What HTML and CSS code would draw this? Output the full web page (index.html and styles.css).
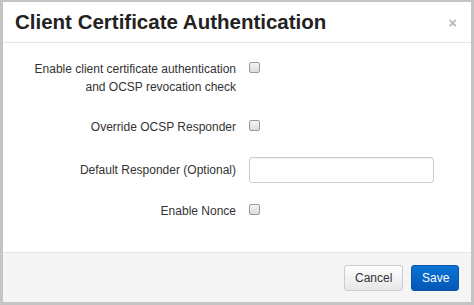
FILE: index.html
```html
<!DOCTYPE html>
<html lang="en">
<head>
  <meta charset="UTF-8">
  <title>Client Certificate Authentication</title>
  <link rel="stylesheet" href="styles.css">
</head>
<body>
  <div class="modal">
    <div class="modal-header">
      <h1>Client Certificate Authentication</h1>
      <span class="close">×</span>
    </div>

    <div class="modal-body">
      <div class="form-row first">
        <label class="field-label">Enable client certificate authentication<br>and OCSP revocation check</label>
        <span class="check"></span>
      </div>
      <div class="form-row">
        <label class="field-label">Override OCSP Responder</label>
        <span class="check"></span>
      </div>
      <div class="form-row input-row">
        <label class="field-label">Default Responder (Optional)</label>
        <input class="text-input" type="text">
      </div>
      <div class="form-row">
        <label class="field-label">Enable Nonce</label>
        <span class="check"></span>
      </div>
    </div>

    <div class="modal-footer">
      <button class="btn btn-default">Cancel</button>
      <button class="btn btn-primary">Save</button>
    </div>
  </div>
</body>
</html>
```

FILE: styles.css
```css
body {
  margin: 0;
  background: #c4c4c4;
  font-family: "Liberation Sans", Arial, sans-serif;
  color: #333;
}

.modal {
  margin: 2px 3px 3px 3px;
  height: 300px;
  background: #fff;
  display: flex;
  flex-direction: column;
}

.modal-header {
  height: 40px;
  border-bottom: 1px solid #e5e5e5;
  display: flex;
  align-items: center;
  justify-content: space-between;
  padding: 0 14px 0 12px;
}

.modal-header h1 {
  margin: 0;
  font-size: 20.5px;
  font-weight: bold;
  color: #222;
}

.close {
  color: #b8b8b8;
  font-size: 15px;
  font-weight: bold;
}

.modal-body {
  flex: 1;
  padding-top: 17px;
}

.form-row {
  display: flex;
  align-items: flex-start;
  margin-bottom: 23px;
}

.form-row.first {
  margin-bottom: 22px;
}

.field-label {
  width: 233px;
  text-align: right;
  font-size: 12px;
  line-height: 18px;
  color: #333;
}

.check {
  width: 9px;
  height: 9px;
  margin: 2px 0 0 13px;
  border: 1px solid #9a9a9a;
  border-radius: 2px;
  background: linear-gradient(#f4f4f4, #dcdcdc);
}

.input-row {
  align-items: center;
  margin-top: -2px;
  margin-bottom: 19px;
}

.text-input {
  width: 183px;
  height: 24px;
  margin-left: 13px;
  padding: 0;
  border: 1px solid #ccc;
  border-radius: 3px;
  box-shadow: inset 0 1px 1px rgba(0, 0, 0, 0.06);
}

.modal-footer {
  height: 49px;
  border-top: 1px solid #e5e5e5;
  background: #f5f5f5;
  display: flex;
  align-items: center;
  justify-content: flex-end;
  gap: 8px;
  padding-right: 12px;
}

.btn {
  height: 26px;
  font-family: "Liberation Sans", Arial, sans-serif;
  font-size: 12px;
  border-radius: 3px;
  padding: 0 10px;
  cursor: pointer;
}

.btn-default {
  width: 59px;
  color: #333;
  border: 1px solid #ccc;
  background: linear-gradient(#fff, #e6e6e6);
}

.btn-primary {
  width: 48px;
  color: #fff;
  border: 1px solid #0754a8;
  background: linear-gradient(#0a74d6, #0557b5);
}
```
